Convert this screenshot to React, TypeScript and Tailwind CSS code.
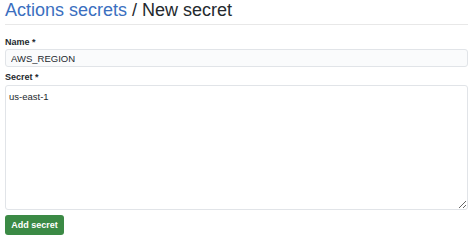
export default function App() {
  return (
    <div className="w-[474px] h-[239px] overflow-hidden bg-white pl-[5px] pr-[6px] font-['Liberation_Sans',Arial,sans-serif] text-[#24292e]">
      <div className="h-[25px] border-b border-[#e8e8e8]">
        <h1 className="text-[18px] leading-[20px] font-normal">
          <a className="text-[#3b6fc0]">Actions secrets</a>
          <span> / New secret</span>
        </h1>
      </div>
      <form className="pt-[12px]">
        <label className="block h-[11px] text-[9px] leading-[11px] font-bold">Name *</label>
        <input
          readOnly
          value="AWS_REGION"
          className="mt-[1px] block h-[18px] w-full rounded-[3px] border border-[#e1e4e8] bg-[#fafbfc] px-[5px] text-[9.5px] outline-none"
        />
        <label className="mt-[5px] block h-[11px] text-[9px] leading-[11px] font-bold">Secret *</label>
        <textarea
          readOnly
          value="us-east-1"
          className="mt-[2px] block h-[125px] w-full resize-y rounded-[3px] border border-[#e1e4e8] bg-white px-[3px] py-[4px] text-[9.5px] leading-[14px] outline-none"
        />
        <button
          type="button"
          className="mt-[5px] block h-[20px] w-[59px] rounded-[3px] bg-[#3b8a45] text-[9px] leading-[20px] font-bold text-white"
        >
          Add secret
        </button>
      </form>
    </div>
  );
}
